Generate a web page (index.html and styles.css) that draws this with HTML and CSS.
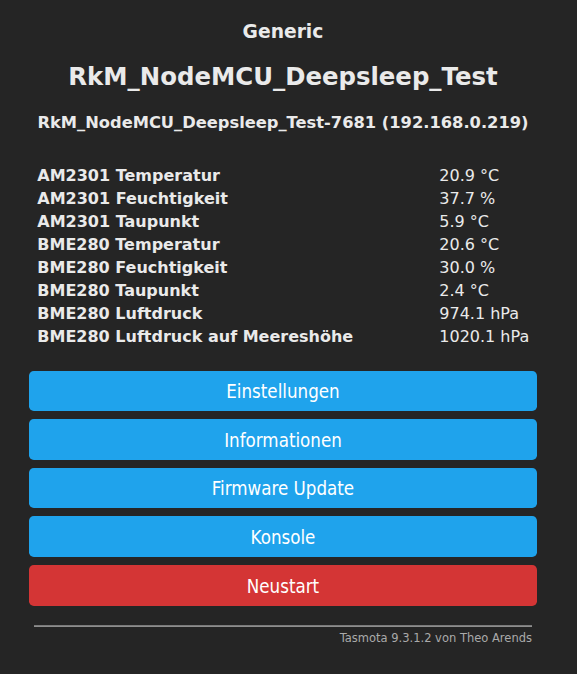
FILE: index.html
```html
<!DOCTYPE html>
<html lang="de">
<head>
<meta charset="utf-8">
<title>Tasmota</title>
<link rel="stylesheet" href="styles.css">
</head>
<body>
<div class="page">
  <div class="module">Generic</div>
  <div class="devname">RkM_NodeMCU_Deepsleep_Test</div>
  <div class="host">RkM_NodeMCU_Deepsleep_Test-7681 (192.168.0.219)</div>

  <div class="sensors">
    <div class="label">AM2301 Temperatur</div><div class="value">20.9 °C</div>
    <div class="label">AM2301 Feuchtigkeit</div><div class="value">37.7 %</div>
    <div class="label">AM2301 Taupunkt</div><div class="value">5.9 °C</div>
    <div class="label">BME280 Temperatur</div><div class="value">20.6 °C</div>
    <div class="label">BME280 Feuchtigkeit</div><div class="value">30.0 %</div>
    <div class="label">BME280 Taupunkt</div><div class="value">2.4 °C</div>
    <div class="label">BME280 Luftdruck</div><div class="value">974.1 hPa</div>
    <div class="label">BME280 Luftdruck auf Meereshöhe</div><div class="value">1020.1 hPa</div>
  </div>

  <div class="buttons">
    <button class="btn">Einstellungen</button>
    <button class="btn">Informationen</button>
    <button class="btn">Firmware Update</button>
    <button class="btn">Konsole</button>
    <button class="btn btn-red">Neustart</button>
  </div>

  <div class="footer">
    <div class="rule"></div>
    <div class="credit">Tasmota 9.3.1.2 von Theo Arends</div>
  </div>
</div>
</body>
</html>
```
FILE: styles.css
```css
html, body {
  margin: 0;
  padding: 0;
  background: #252525;
}
body {
  font-family: "DejaVu Sans", Verdana, sans-serif;
  color: #eaeaea;
}
.page {
  width: 508px;
  margin-left: 29px;
  padding-top: 21px;
}
.module {
  text-align: center;
  font-weight: bold;
  font-size: 18.72px;
  line-height: 22px;
}
.devname {
  text-align: center;
  font-weight: bold;
  font-size: 24.4px;
  line-height: 28px;
  margin-top: 20.4px;
}
.host {
  text-align: center;
  font-weight: bold;
  font-size: 16.3px;
  line-height: 20px;
  margin-top: 21.5px;
}
.sensors {
  margin-top: 31.1px;
  display: grid;
  grid-template-columns: 402px 1fr;
  grid-auto-rows: 23px;
  align-items: center;
  padding-left: 8.3px;
  font-size: 16px;
  line-height: 19px;
}
.label {
  font-weight: bold;
  white-space: nowrap;
}
.value {
  white-space: nowrap;
}
.buttons {
  margin-top: 22.7px;
  display: flex;
  flex-direction: column;
  gap: 8px;
}
.btn {
  display: block;
  width: 100%;
  height: 40.6px;
  border: 0;
  border-radius: 4.8px;
  background: #1fa3ec;
  color: #ffffff;
  font-family: "DejaVu Sans Condensed", "DejaVu Sans", sans-serif;
  font-size: 18.6px;
  line-height: 36px;
  padding: 2.5px 0 0 0;
  text-align: center;
}
.btn-red {
  background: #d43535;
}
.footer {
  margin-top: 19.3px;
  padding: 0 5px;
}
.rule {
  height: 0;
  border-top: 1px solid #7a7a7a;
  border-bottom: 1px solid #8e8e8e;
}
.credit {
  margin-top: 4px;
  text-align: right;
  font-size: 11.5px;
  line-height: 14px;
  color: #aaaaaa;
}
```
